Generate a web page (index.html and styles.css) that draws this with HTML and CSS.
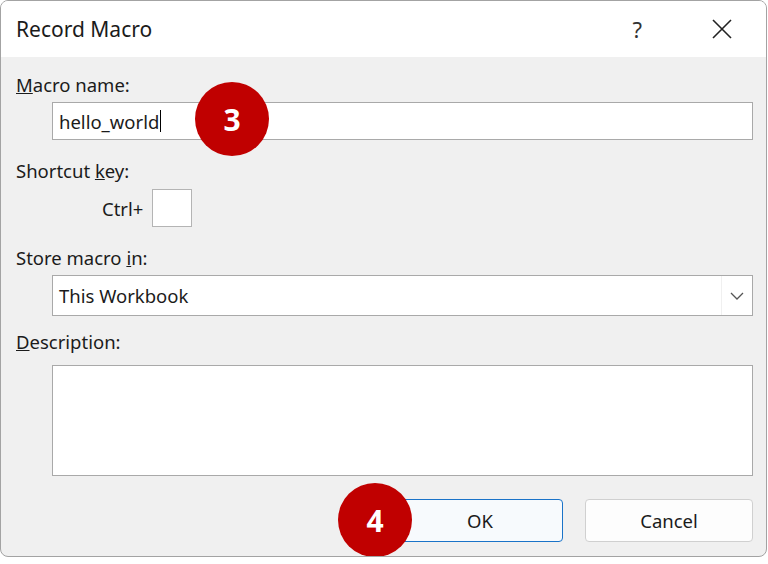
FILE: index.html
```html
<!DOCTYPE html>
<html lang="en">
<head>
    <meta charset="UTF-8">
    <title>Record Macro</title>
    <link rel="stylesheet" href="styles.css">
</head>
<body>
    <!-- Record Macro dialog -->
    <div class="dialog">
        <div class="titlebar">
            <span class="title">Record Macro</span>
            <span class="help">?</span>
            <svg class="close" width="20" height="20" viewBox="0 0 20 20">
                <path d="M1 1 L19 19 M19 1 L1 19" stroke="#222" stroke-width="1.6" fill="none"/>
            </svg>
        </div>

        <div class="content">
            <label class="label first"><u>M</u>acro name:</label>
            <div class="field name-field">
                <span>hello_world</span><span class="caret"></span>
            </div>

            <label class="label">Shortcut <u>k</u>ey:</label>
            <div class="shortcut">
                <span>Ctrl+</span>
                <div class="key-box"></div>
            </div>

            <label class="label">Store macro <u>i</u>n:</label>
            <div class="field select">
                <span class="select-value">This Workbook</span>
                <span class="select-arrow">
                    <svg width="14" height="8" viewBox="0 0 14 8">
                        <path d="M1 1 L7 7 L13 1" stroke="#555" stroke-width="1.3" fill="none"/>
                    </svg>
                </span>
            </div>

            <label class="label desc"><u>D</u>escription:</label>
            <div class="field textarea"></div>

            <div class="buttons">
                <button class="btn btn-ok">OK</button>
                <button class="btn">Cancel</button>
            </div>
        </div>

        <!-- Step markers laid over the dialog -->
        <div class="step step-3">3</div>
        <div class="step step-4">4</div>
    </div>
</body>
</html>
```

FILE: styles.css
```css
/* Page */
body {
    margin: 0;
    background: #ffffff;
    font-family: 'Noto Sans', 'Open Sans', sans-serif;
    color: #1b1b1b;
}

/* Dialog window */
.dialog {
    position: relative;
    width: 767px;
    height: 557px;
    box-sizing: border-box;
    border: 1px solid #a3a3a3;
    border-radius: 8px;
    background: #f0f0f0;
    overflow: hidden;
    display: flex;
    flex-direction: column;
}

/* Title bar */
.titlebar {
    height: 56px;
    flex-shrink: 0;
    background: #ffffff;
    display: flex;
    align-items: center;
    padding: 0 34px 0 15px;
}

.title {
    font-size: 21px;
}

.help {
    margin-left: auto;
    margin-right: 70px;
    font-size: 22px;
    color: #333;
}

.close {
    display: block;
}

/* Form content */
.content {
    padding: 0 13px 0 15px;
    font-size: 18.5px;
}

.label {
    display: block;
    line-height: 24px;
    margin-top: 19px;
}

.label.first {
    margin-top: 16px;
}

.label.desc {
    margin-top: 14px;
}

.field {
    margin-left: 36px;
    box-sizing: border-box;
    border: 1px solid #a9a9a9;
    background: #ffffff;
}

.name-field {
    height: 38px;
    margin-top: 5px;
    display: flex;
    align-items: center;
    padding-left: 6px;
}

.caret {
    display: inline-block;
    width: 1px;
    height: 22px;
    background: #000;
    margin-left: 1px;
}

.shortcut {
    display: flex;
    align-items: center;
    gap: 9px;
    margin-top: 6px;
    margin-left: 86px;
}

.key-box {
    width: 40px;
    height: 38px;
    box-sizing: border-box;
    border: 1px solid #b4b4b4;
    background: #ffffff;
}

.select {
    height: 41px;
    margin-top: 5px;
    display: flex;
    align-items: center;
}

.select-value {
    padding-left: 6px;
    flex: 1;
}

.select-arrow {
    width: 30px;
    height: 100%;
    border-left: 1px solid #f0f0f0;
    display: flex;
    align-items: center;
    justify-content: center;
}

.textarea {
    height: 111px;
    margin-top: 11px;
}

/* Buttons */
.buttons {
    display: flex;
    justify-content: flex-end;
    gap: 22px;
    margin-top: 23px;
}

.btn {
    width: 168px;
    height: 43px;
    border: 1px solid #d0d0d0;
    border-radius: 4px;
    background: #fdfdfd;
    font-family: inherit;
    font-size: 18.5px;
    color: #1b1b1b;
}

.btn-ok {
    width: 166px;
    border: 1.5px solid #1a73c8;
    background: #f7fafd;
}

/* Red numbered step markers */
.step {
    position: absolute;
    width: 74px;
    height: 74px;
    border-radius: 50%;
    background: #c00000;
    color: #ffffff;
    font-weight: bold;
    font-size: 30px;
    display: flex;
    align-items: center;
    justify-content: center;
}

.step-3 {
    left: 194px;
    top: 81px;
}

.step-4 {
    left: 337px;
    top: 482px;
}
```
